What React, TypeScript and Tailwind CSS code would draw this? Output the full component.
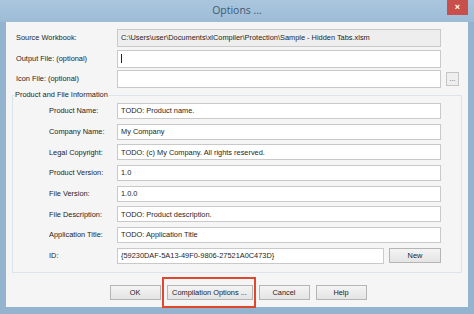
import React from "react";

const font = { fontFamily: '"Liberation Sans", Arial, sans-serif' };

function Field({ value, className = "", bg = "bg-white", cursor = false }: { value?: string; className?: string; bg?: string; cursor?: boolean }) {
  return (
    <div className={`flex items-center border border-[#c9c9c9] ${bg} px-[3px] text-[7.4px] leading-none text-[#1e1e1e] ${className}`}>
      {cursor ? <span className="block h-[9px] w-px bg-[#222]" /> : <span className="whitespace-nowrap">{value}</span>}
    </div>
  );
}

function Btn({ children, className = "" }: { children: React.ReactNode; className?: string }) {
  return (
    <div className={`flex h-[15px] items-center justify-center whitespace-nowrap border border-[#b5b5b5] bg-gradient-to-b from-[#f4f4f4] to-[#e4e4e4] text-[7.4px] leading-none text-[#222] ${className}`}>
      {children}
    </div>
  );
}

export default function App() {
  const rows: [string, string][] = [
    ["Product Name:", "TODO: Product name."],
    ["Company Name:", "My Company"],
    ["Legal Copyright:", "TODO: (c) My Company. All rights reserved."],
    ["Product Version:", "1.0"],
    ["File Version:", "1.0.0"],
    ["File Description:", "TODO: Product description."],
    ["Application Title:", "TODO: Application Title"],
  ];
  return (
    <div className="flex h-[314px] w-[474px] flex-col bg-[#93b3ce]" style={font}>
      <div className="relative flex h-[22px] items-center justify-center bg-gradient-to-b from-[#a9c6de] to-[#9dbcd6]">
        <span className="text-[10.5px] text-[#3d5a74]" style={{ fontFamily: '"Open Sans", sans-serif' }}>Options ...</span>
        <div className="absolute right-[6px] top-0 flex h-[15px] w-[21px] items-center justify-center bg-[#c9504a] text-[9px] font-bold leading-none text-white">
          ×
        </div>
      </div>
      <div className="mx-[6px] flex h-[285px] flex-col bg-[#f5f5f5] pt-[7px] text-[7.4px] leading-none text-[#1e1e1e]">
        <div className="flex flex-col gap-[2.5px]">
          <div className="flex items-center">
            <span className="w-[111px] pl-[10px]">Source Workbook:</span>
            <Field className="h-[18px] w-[324px]" bg="bg-[#eeeeee]" value="C:\Users\user\Documents\xlCompiler\Protection\Sample - Hidden Tabs.xlsm" />
          </div>
          <div className="flex items-center">
            <span className="w-[111px] pl-[10px]">Output File: (optional)</span>
            <Field className="h-[18px] w-[324px] border-[#a9bdd0]" cursor />
          </div>
          <div className="flex items-center">
            <span className="w-[111px] pl-[10px]">Icon File: (optional)</span>
            <Field className="h-[18px] w-[324px]" />
            <div className="ml-[5px] flex h-[14px] w-[13px] items-end justify-center border border-[#c4c4c4] bg-[#eeeeee] pb-[3px] text-[7px] leading-none text-[#555]">...</div>
          </div>
        </div>
        <div className="relative mx-[6px] mt-[7px] h-[178px] border border-[#dde3e8] pt-[7px]">
          <span className="absolute left-[1px] top-[-5px] bg-[#f5f5f5] px-[1px]">Product and File Information</span>
          <div className="flex flex-col gap-[4.7px]">
            {rows.map(([l, v]) => (
              <div key={l} className="flex items-center">
                <span className="w-[104px] pl-[36px]">{l}</span>
                <Field className="h-[16px] w-[324px]" value={v} />
              </div>
            ))}
            <div className="flex items-center">
              <span className="w-[104px] pl-[36px]">ID:</span>
              <Field className="h-[16px] w-[267px]" value="{59230DAF-5A13-49F0-9806-27521A0C473D}" />
              <Btn className="ml-[5px] w-[52px]">New</Btn>
            </div>
          </div>
        </div>
        <div className="mt-[12px] flex justify-center gap-[6px] pl-[2px]">
          <Btn className="w-[51px]">OK</Btn>
          <div className="relative">
            <Btn className="w-[86px]">Compilation Options ...</Btn>
            <div className="absolute bottom-[-8px] left-[-5px] right-[-3px] top-[-8px] border-2 border-[#e0472f]" />
          </div>
          <Btn className="w-[51px]">Cancel</Btn>
          <Btn className="w-[51px]">Help</Btn>
        </div>
      </div>
    </div>
  );
}
